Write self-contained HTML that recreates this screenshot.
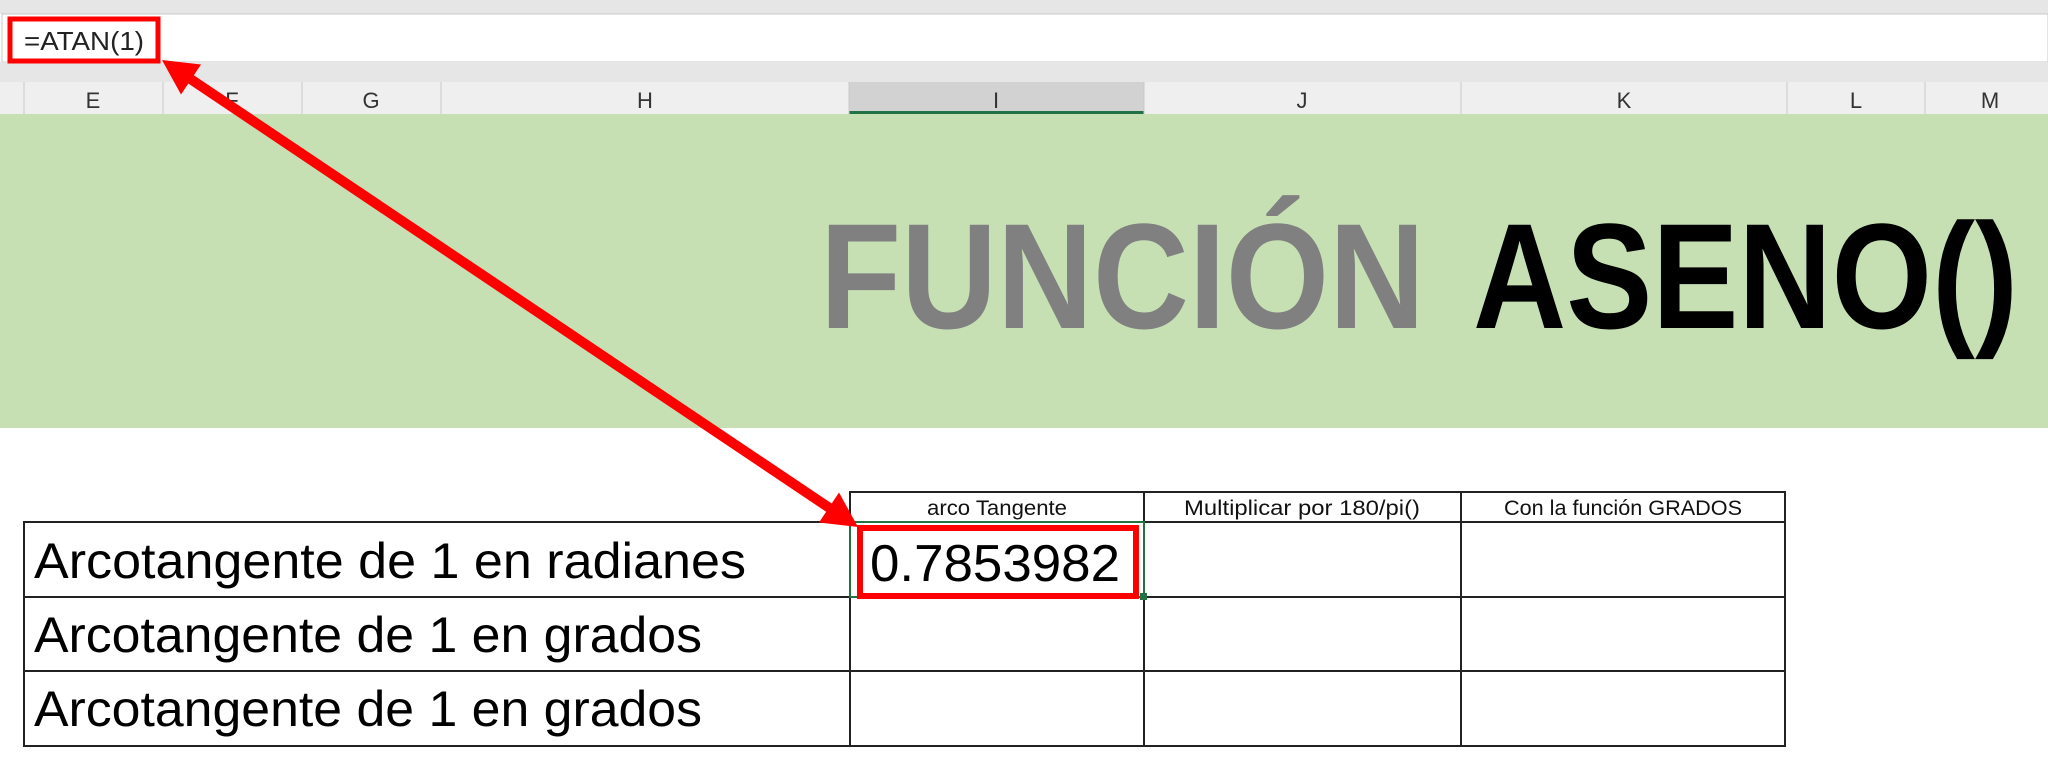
<!DOCTYPE html>
<html><head><meta charset="utf-8"><style>html,body{margin:0;padding:0;background:#fff;}svg{display:block}</style></head>
<body>
<svg width="2048" height="760" viewBox="0 0 2048 760" xmlns="http://www.w3.org/2000/svg" font-family="Liberation Sans, sans-serif">
<rect x="0" y="0" width="2048" height="760" fill="#fff"/>
<rect x="0" y="0" width="2048" height="14" fill="#e6e6e6"/>
<rect x="2" y="14" width="2046" height="48" fill="#fff" stroke="#c8c8c8" stroke-width="1"/>
<rect x="0" y="62" width="2048" height="20" fill="#e6e6e6"/>
<rect x="0" y="82" width="2048" height="32" fill="#efefef"/>
<rect x="849" y="82" width="295" height="32" fill="#d2d2d2"/>
<rect x="849" y="111" width="295" height="3" fill="#217346"/>
<g stroke="#c8c8c8" stroke-width="1">
<line x1="24" y1="82" x2="24" y2="114"/><line x1="163" y1="82" x2="163" y2="114"/>
<line x1="302" y1="82" x2="302" y2="114"/><line x1="441" y1="82" x2="441" y2="114"/>
<line x1="849" y1="82" x2="849" y2="114"/><line x1="1144" y1="82" x2="1144" y2="114"/>
<line x1="1461" y1="82" x2="1461" y2="114"/><line x1="1787" y1="82" x2="1787" y2="114"/>
<line x1="1925" y1="82" x2="1925" y2="114"/>
</g>
<g font-size="22" fill="#333" text-anchor="middle">
<text x="93" y="108">E</text><text x="232" y="108">F</text><text x="371" y="108">G</text>
<text x="645" y="108">H</text><text x="996" y="108">I</text><text x="1302" y="108">J</text>
<text x="1624" y="108">K</text><text x="1856" y="108">L</text><text x="1990" y="108">M</text>
</g>
<rect x="0" y="114" width="2048" height="314" fill="#c6e0b4"/>
<text x="820" y="328" font-size="150" font-weight="bold" fill="#808080" textLength="605" lengthAdjust="spacingAndGlyphs">FUNCIÓN</text>
<text x="1473" y="328" font-size="150" font-weight="bold" fill="#000" textLength="545" lengthAdjust="spacingAndGlyphs">ASENO()</text>
<text x="24" y="50" font-size="26" fill="#222" textLength="120" lengthAdjust="spacingAndGlyphs">=ATAN(1)</text>
<rect x="10" y="19" width="148" height="42" fill="none" stroke="#f00" stroke-width="5"/>
<g stroke="#222" stroke-width="2" fill="none">
<rect x="850" y="492" width="935" height="254"/>
<rect x="24" y="522" width="1761" height="224"/>
<line x1="850" y1="492" x2="850" y2="746"/><line x1="1144" y1="492" x2="1144" y2="746"/>
<line x1="1461" y1="492" x2="1461" y2="746"/>
<line x1="24" y1="597" x2="1785" y2="597"/><line x1="24" y1="671" x2="1785" y2="671"/>
</g>
<g font-size="21" fill="#111" text-anchor="middle">
<text x="997" y="515" textLength="140" lengthAdjust="spacingAndGlyphs">arco Tangente</text>
<text x="1302" y="515" textLength="236" lengthAdjust="spacingAndGlyphs">Multiplicar por 180/pi()</text>
<text x="1623" y="515" textLength="238" lengthAdjust="spacingAndGlyphs">Con la función GRADOS</text>
</g>
<g font-size="50" fill="#000">
<text x="34" y="578" textLength="712" lengthAdjust="spacingAndGlyphs">Arcotangente de 1 en radianes</text>
<text x="34" y="652" textLength="668" lengthAdjust="spacingAndGlyphs">Arcotangente de 1 en grados</text>
<text x="34" y="726" textLength="668" lengthAdjust="spacingAndGlyphs">Arcotangente de 1 en grados</text>
</g>
<rect x="850" y="522" width="294" height="75" fill="none" stroke="#217346" stroke-width="2"/>
<rect x="1140" y="593" width="7" height="7" fill="#217346"/>
<text x="870" y="581" font-size="52" fill="#000" textLength="250" lengthAdjust="spacingAndGlyphs">0.7853982</text>
<rect x="860" y="528" width="276" height="68" fill="none" stroke="#f00" stroke-width="6"/>
<line x1="189" y1="78" x2="831" y2="509" stroke="#f00" stroke-width="10"/>
<polygon points="162,60 181,94.5 201,64.5" fill="#f00"/>
<polygon points="858,527 819,522.5 839,492.5" fill="#f00"/>
</svg>
</body></html>
